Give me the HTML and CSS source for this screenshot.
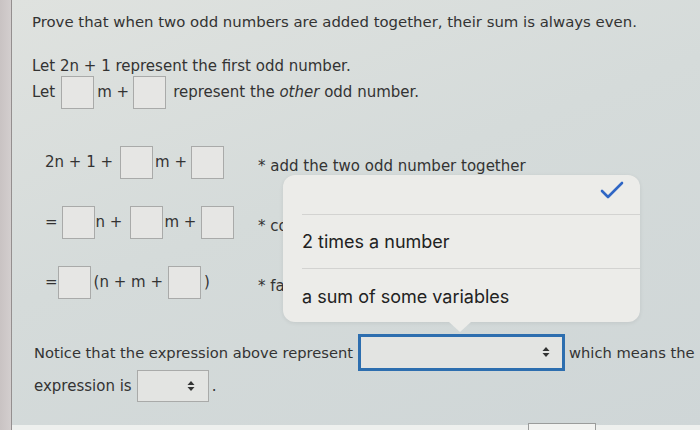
FILE: index.html
```html
<!DOCTYPE html>
<html lang="en">
<head>
    <meta charset="UTF-8">
    <title>Odd numbers proof</title>
    <link rel="stylesheet" href="styles.css">
</head>
<body>
    <div class="bezel"></div>
    <div class="sheet">
        <div class="question">
            <div class="title">Prove that when two odd numbers are added together, their sum is always even.</div>

            <div class="line let1">Let 2n + 1 represent the first odd number.</div>
            <div class="line let2">
                <span>Let</span>
                <span class="box b-let1"></span>
                <span>m +</span>
                <span class="box b-let2"></span>
                <span class="after">represent the <em>other</em> odd number.</span>
            </div>

            <div class="steps">
                <div class="step row-a">
                    <div class="expr">
                        <span>2n + 1 +</span>
                        <span class="box a1"></span>
                        <span>m +</span>
                        <span class="box a2"></span>
                    </div>
                    <div class="note">* add the two odd number together</div>
                </div>
                <div class="step row-b">
                    <div class="expr">
                        <span>=</span>
                        <span class="box c1"></span>
                        <span>n +</span>
                        <span class="box c2"></span>
                        <span>m +</span>
                        <span class="box c3"></span>
                    </div>
                    <div class="note clipped">* combine like terms</div>
                </div>
                <div class="step row-c">
                    <div class="expr">
                        <span>=</span>
                        <span class="box d1"></span>
                        <span>(n + m +</span>
                        <span class="box d2"></span>
                        <span>)</span>
                    </div>
                    <div class="note clipped">* factor out the common factor</div>
                </div>
            </div>

            <div class="line notice">
                <span>Notice that the expression above represent</span>
                <span class="select wide focused">
                    <svg width="8" height="12" viewBox="0 0 8 12"><path d="M4 1 L7.5 5 H0.5 Z M4 11 L7.5 7 H0.5 Z" fill="#333"/></svg>
                </span>
                <span>which means the</span>
            </div>
            <div class="line expr-is">
                <span>expression is</span>
                <span class="select small">
                    <svg width="8" height="12" viewBox="0 0 8 12"><path d="M4 1 L7.5 5 H0.5 Z M4 11 L7.5 7 H0.5 Z" fill="#333"/></svg>
                </span>
                <span class="dot">.</span>
            </div>
        </div>

        <div class="popover">
            <div class="option checked">
                <svg width="24" height="18" viewBox="0 0 24 18"><polyline points="2,10 8,16 22,2" fill="none" stroke="#2f66c4" stroke-width="2.6" stroke-linecap="round" stroke-linejoin="round"/></svg>
            </div>
            <div class="option">2 times a number</div>
            <div class="option last">a sum of some variables</div>
            <div class="arrow"></div>
        </div>

        <div class="footer">
            <span class="footer-btn"></span>
        </div>
    </div>
</body>
</html>
```

FILE: styles.css
```css
body {
    margin: 0;
    width: 700px;
    height: 430px;
    display: flex;
    overflow: hidden;
    font-family: "DejaVu Sans", Verdana, sans-serif;
    color: #333;
    background: #cdc8c8;
}
.bezel {
    flex: none;
    width: 11px;
    background: linear-gradient(90deg, #c9c3c3, #d3cece);
}
.sheet {
    flex: 1;
    min-width: 0;
    position: relative;
    overflow: hidden;
    border-left: 1px solid #948f8f;
    background: linear-gradient(160deg, #dfe2df 0%, #d5dbda 45%, #cfd6d7 100%);
    display: flex;
    flex-direction: column;
}
.question {
    flex: 1;
    padding: 12px 0 0 20px;
    font-size: 15px;
}
.title {
    height: 20px;
    line-height: 20px;
    font-size: 14.9px;
}
.line {
    display: flex;
    align-items: center;
    white-space: nowrap;
}
.let1 {
    margin-top: 25px;
    height: 18px;
}
.let2 {
    height: 34px;
}
.let2 .b-let1 {
    margin: 0 3px 0 6px;
}
.let2 .b-let2 {
    margin: 0 7px 0 4px;
}
.box {
    display: inline-block;
    width: 31px;
    height: 31px;
    border: 1px solid #a9aaa9;
    background: #e6e6e4;
    flex: none;
}
em {
    font-style: italic;
}
.steps {
    margin-top: 36px;
    padding-left: 13px;
    display: flex;
    flex-direction: column;
    gap: 26px;
}
.step {
    display: grid;
    grid-template-columns: 213px 1fr;
    align-items: center;
    height: 34px;
    white-space: nowrap;
}
.expr {
    display: flex;
    align-items: center;
}
.note {
    padding-top: 8px;
}
.note.clipped {
    width: 25px;
    overflow: hidden;
}
.row-a .a1 {
    margin: 0 2px 0 7px;
}
.row-a .a2 {
    margin-left: 4px;
}
.row-b .c1 {
    margin: 0 1px 0 4px;
}
.row-b .c2 {
    margin: 0 1px 0 8px;
}
.row-b .c3 {
    margin-left: 5px;
}
.row-c .d1 {
    margin: 0 3px 0 0;
}
.row-c .d2 {
    margin: 0 3px 0 5px;
}
.notice {
    margin-top: 35px;
    height: 36px;
    padding-left: 2px;
    font-size: 14.7px;
}
.select {
    display: flex;
    align-items: center;
    justify-content: flex-end;
    background: #e3e4e2;
    flex: none;
    box-sizing: border-box;
}
.select.wide {
    width: 207px;
    height: 37px;
    margin: 0 4px 0 5px;
    padding-right: 12px;
    border: 3px solid #2d6eaf;
}
.select.small {
    width: 72px;
    height: 32px;
    border: 1px solid #a9aaa9;
    margin-left: 5px;
    padding-right: 13px;
}
.expr-is {
    height: 32px;
    padding-left: 2px;
}
.dot {
    margin-left: 3px;
}
.popover {
    position: absolute;
    left: 271px;
    top: 175px;
    width: 357px;
    height: 147px;
    background: #ecece9;
    border-radius: 12px;
    box-shadow: 0 1px 4px rgba(0, 0, 0, 0.08);
    font-family: Inter, "Liberation Sans", sans-serif;
    font-size: 18px;
    color: #222;
}
.option {
    height: 54px;
    margin-left: 19px;
    display: flex;
    align-items: center;
    border-bottom: 1px solid #d3d3d1;
    box-sizing: border-box;
}
.option.checked {
    height: 40px;
    justify-content: flex-end;
    align-items: flex-start;
    padding: 6px 16px 0 0;
}
.option.last {
    border-bottom: none;
}
.arrow {
    position: absolute;
    left: 166px;
    bottom: -10px;
    width: 0;
    height: 0;
    border-left: 11px solid transparent;
    border-right: 11px solid transparent;
    border-top: 10px solid #ecece9;
}
.footer {
    height: 5px;
    background: #eef0ee;
    position: relative;
}
.footer-btn {
    position: absolute;
    left: 516px;
    top: -2px;
    width: 66px;
    height: 10px;
    border: 1px solid #9a9c9b;
    background: #f2f3f1;
}
```
